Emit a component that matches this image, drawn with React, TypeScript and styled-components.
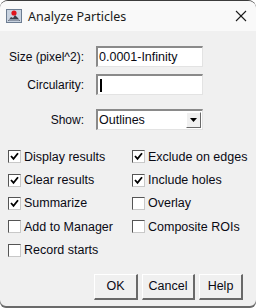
import React, { FunctionComponent } from 'react';
import styled, { createGlobalStyle } from 'styled-components';

const GlobalStyle = createGlobalStyle`
  html, body {
    margin: 0;
    padding: 0;
    background: #ffffff;
  }
  body {
    width: 256px;
    height: 308px;
    overflow: hidden;
  }
`;

const Window = styled.div`
    width: 256px;
    height: 308px;
    box-sizing: border-box;
    background: #f0f0f0;
    border-top: 1px solid #3c3c3c;
    border-radius: 8px 8px 6px 6px;
    box-shadow: inset 0 -2px 0 #6a6a6a;
    overflow: hidden;
    display: flex;
    flex-direction: column;
    font-family: 'Liberation Sans', Arial, sans-serif;
    font-size: 12px;
    color: #0a0a14;
  `,
  TitleBar = styled.div`
    height: 30px;
    background: #f9f9f9;
    display: flex;
    align-items: center;
    padding: 0 8px 0 6px;
  `,
  TitleText = styled.span`
    flex: 1;
    margin-left: 6px;
    font-family: 'Noto Sans', 'Open Sans', sans-serif;
    font-size: 12.5px;
    color: #1a1a1a;
  `,
  CloseIcon = styled.svg`
    width: 12px;
    height: 12px;
    margin-right: 1px;
    stroke: #1c1c1c;
    stroke-width: 1.1;
  `,
  Body = styled.div`
    display: flex;
    flex-direction: column;
    padding: 15px 0 0 8px;
  `,
  FieldGrid = styled.div`
    display: grid;
    grid-template-columns: 76px 107px;
    column-gap: 12px;
    row-gap: 7px;
    align-items: center;
  `,
  Label = styled.span<{ $gapTop?: number }>`
    text-align: right;
    margin-top: ${(p) => p.$gapTop || 0}px;
    white-space: nowrap;
  `,
  TextField = styled.div<{ $gapTop?: number }>`
    height: 21px;
    box-sizing: border-box;
    margin-top: ${(p) => p.$gapTop || 0}px;
    background: #fff;
    border-style: solid;
    border-width: 2px 1px 1px 2px;
    border-color: #8a8a8a #e3e3e3 #e3e3e3 #8a8a8a;
    display: flex;
    align-items: center;
    padding-left: 1px;
    font-size: 12.5px;
  `,
  Caret = styled.span`
    width: 1.5px;
    height: 13px;
    background: #000;
    margin-left: 1px;
  `,
  SelectText = styled.span`
    flex: 1;
  `,
  SelectButton = styled.div`
    width: 15px;
    height: 16px;
    margin-right: 1px;
    box-sizing: border-box;
    background: #f0f0f0;
    border-style: solid;
    border-width: 1px;
    border-color: #ffffff #696969 #696969 #ffffff;
    display: flex;
    align-items: center;
    justify-content: center;
  `,
  CheckGrid = styled.div`
    display: grid;
    grid-template-columns: 124px 120px;
    grid-auto-rows: 23.4px;
    margin-top: 15px;
    align-items: center;
  `,
  CheckRow = styled.label`
    display: flex;
    align-items: center;
    gap: 3px;
    white-space: nowrap;
    font-size: 12.5px;
  `,
  Box = styled.span`
    width: 13px;
    height: 13px;
    box-sizing: border-box;
    background: #fff;
    border-style: solid;
    border-width: 1px;
    border-color: #555 #c8c8c8 #c8c8c8 #555;
    display: flex;
    align-items: center;
    justify-content: center;
  `,
  ButtonRow = styled.div`
    display: flex;
    justify-content: flex-end;
    gap: 4px;
    padding-right: 13px;
    margin-top: 12px;
  `,
  Button = styled.div<{ $w: number }>`
    width: ${(p) => p.$w}px;
    height: 26px;
    box-sizing: border-box;
    background: #f0f0f0;
    border-style: solid;
    border-width: 1px 2px 2px 1px;
    border-color: #ffffff #696969 #696969 #ffffff;
    display: flex;
    align-items: center;
    justify-content: center;
    font-size: 12.5px;
  `;

const AppIcon: FunctionComponent = () => (
  <svg width="16" height="16" viewBox="0 0 16 16">
    <rect x="0.5" y="1.5" width="15" height="13" fill="#c9d3e0" stroke="#6d7d92" />
    <path d="M2 13 L5 9 L7 10 L9 7 L12 10 L14 13 Z" fill="#3a3f4a" />
    <rect x="3" y="11" width="10" height="2" fill="#8c96a6" />
    <circle cx="8" cy="5" r="2.6" fill="#e0141c" />
  </svg>
);

const Check: FunctionComponent<{ on: boolean }> = ({ on }) => (
  <Box>
    {on && (
      <svg width="9" height="9" viewBox="0 0 9 9">
        <polyline points="1,4 3.5,6.8 8,1.2" fill="none" stroke="#000" strokeWidth="1.8" />
      </svg>
    )}
  </Box>
);

const checks: [string, boolean][] = [
  ['Display results', true],
  ['Exclude on edges', true],
  ['Clear results', true],
  ['Include holes', true],
  ['Summarize', true],
  ['Overlay', false],
  ['Add to Manager', false],
  ['Composite ROIs', false],
  ['Record starts', false],
];

const App: FunctionComponent = () => (
  <>
    <GlobalStyle />
    <Window>
      <TitleBar>
        <AppIcon />
        <TitleText>Analyze Particles</TitleText>
        <CloseIcon viewBox="0 0 12 12">
          <line x1="1" y1="1" x2="11" y2="11" />
          <line x1="11" y1="1" x2="1" y2="11" />
        </CloseIcon>
      </TitleBar>
      <Body>
        <FieldGrid>
          <Label>Size (pixel^2):</Label>
          <TextField>0.0001-Infinity</TextField>
          <Label>Circularity:</Label>
          <TextField>
            <Caret />
          </TextField>
          <Label $gapTop={7}>Show:</Label>
          <TextField $gapTop={7}>
            <SelectText>Outlines</SelectText>
            <SelectButton>
              <svg width="7" height="4" viewBox="0 0 7 4">
                <polygon points="0,0 7,0 3.5,4" fill="#000" />
              </svg>
            </SelectButton>
          </TextField>
        </FieldGrid>
        <CheckGrid>
          {checks.map(([name, on]) => (
            <CheckRow key={name}>
              <Check on={on} />
              {name}
            </CheckRow>
          ))}
        </CheckGrid>
        <ButtonRow>
          <Button $w={44}>OK</Button>
          <Button $w={53}>Cancel</Button>
          <Button $w={44}>Help</Button>
        </ButtonRow>
      </Body>
    </Window>
  </>
);

export default App;
